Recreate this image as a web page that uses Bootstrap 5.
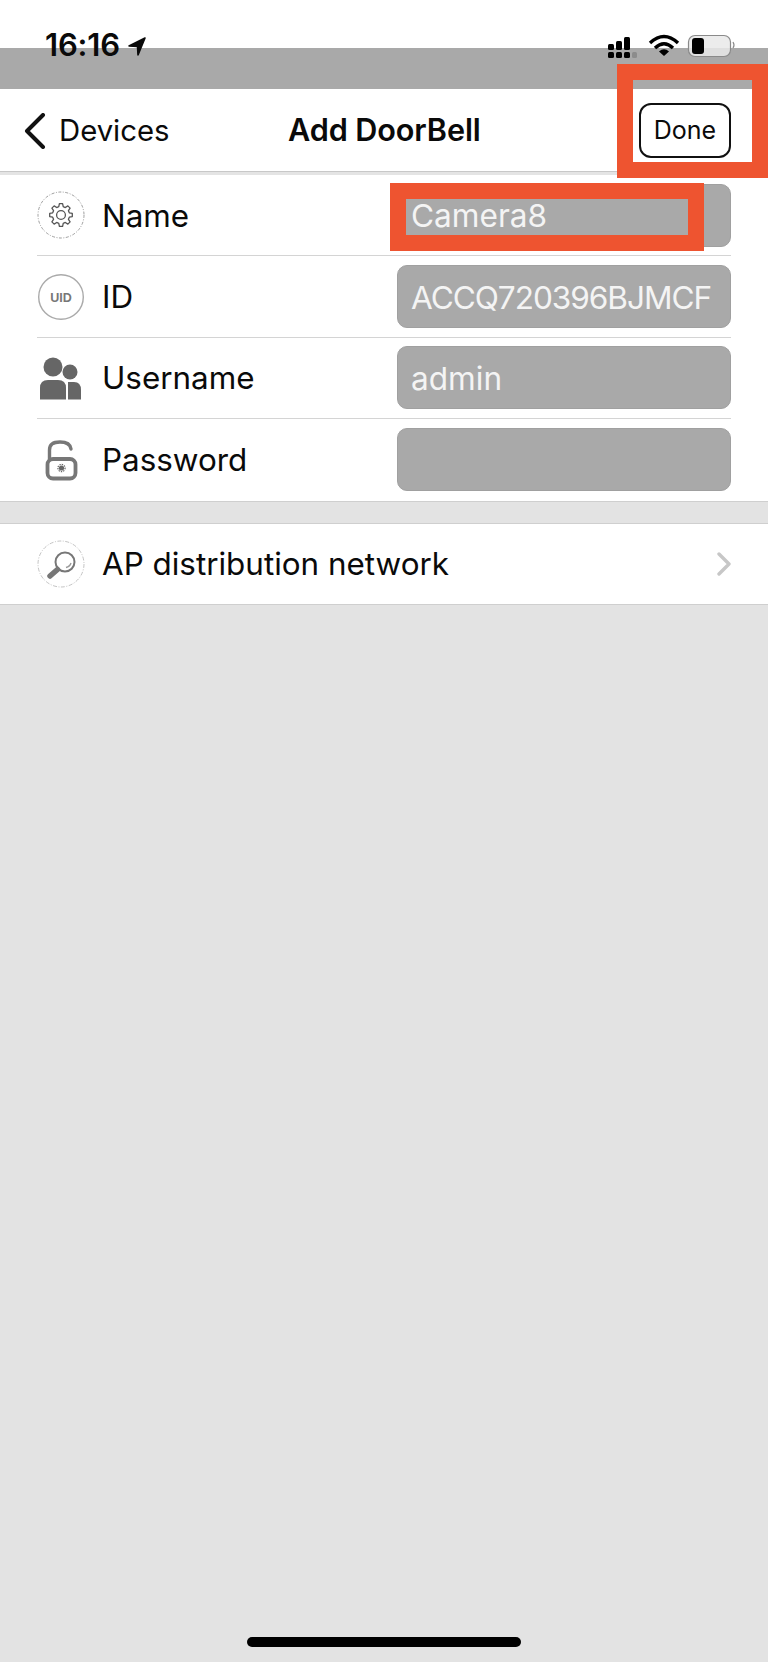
<!DOCTYPE html>
<html lang="en">
<head>
    <meta charset="UTF-8">
    <meta name="viewport" content="width=device-width, initial-scale=1.0">
    <title>Add DoorBell</title>
    <link rel="stylesheet" href="https://cdn.jsdelivr.net/npm/bootstrap@5.3.0/dist/css/bootstrap.min.css">
    <style>
        body {
            font-family: Inter, "Liberation Sans", sans-serif;
            background-color: #e3e3e3;
            color: #0a0a0a;
        }
        .phone-page {
            position: relative;
            width: 768px;
            height: 1662px;
            overflow: hidden;
            background-color: #e3e3e3;
        }
        .status-gap { height: 48px; background-color: #fff; }
        .grey-band { height: 41px; background-color: #a9a9a9; }
        .nav-bar {
            height: 86px;
            background-color: #fff;
            border-bottom: 3px solid #e4e4e4;
            box-shadow: inset 0 -1px 0 #c8c8c8;
            padding-left: 24px;
            padding-right: 37px;
        }
        .back-label { font-size: 29.3px; margin-left: 13px; }
        .nav-title {
            font-size: 30.6px;
            font-weight: 600;
            position: absolute;
            left: 288px;
            top: 110px;
            line-height: 40px;
            letter-spacing: -.1px;
        }
        .done-btn {
            width: 92px;
            height: 55px;
            padding: 0;
            font-size: 25px;
            color: #0a0a0a;
            border: 2px solid #111;
            border-radius: 12px;
            background: #fff;
        }
        .form-group-box { background-color: #fff; border-bottom: 1px solid #cfcfcf; }
        .form-line {
            height: 81.4px;
            padding-left: 37px;
            padding-right: 37px;
        }
        .form-line-inner { border-bottom: 1px solid #d4d4d4; height: 100%; }
        .form-line-inner.is-last { border-bottom: 0; }
        .row-icon { width: 48px; height: 48px; flex: none; display: block; }
        .row-label { font-size: 31.4px; margin-left: 17px; white-space: nowrap; padding-top: 2px; }
        .value-box {
            width: 334px;
            height: 63px;
            background-color: #a9a9a9;
            border: 1px solid #a0a0a0;
            border-radius: 10px;
            color: #f4f4f4;
            font-size: 31.6px;
            padding-left: 13px;
            padding-top: 2px;
        }
        .value-tight { letter-spacing: -1.05px; }
        .section-gap { height: 22px; border-bottom: 1px solid #cfcfcf; }
        .ap-row { height: 80px; padding-left: 37px; padding-right: 37px; }
        .home-bar {
            position: absolute;
            left: 247px;
            top: 1637px;
            width: 274px;
            height: 10px;
            border-radius: 5px;
            background-color: #000;
        }
        .status-time {
            position: absolute;
            left: 45px;
            top: 27px;
            font-size: 31px;
            line-height: 36px;
            font-weight: 600;
            letter-spacing: -.2px;
        }
        .status-svg { position: absolute; left: 0; top: 0; }
        .mark-box {
            position: absolute;
            border: 16px solid #ee5430;
        }
        .mark-done { left: 617px; top: 64px; width: 151px; height: 114px; }
        .mark-name { left: 390px; top: 183px; width: 314px; height: 68px; }
    </style>
</head>
<body>
    <div class="phone-page">
        <div class="status-gap"></div>
        <div class="grey-band"></div>

        <!-- nav bar -->
        <div class="nav-bar d-flex align-items-center justify-content-between">
            <div class="d-flex align-items-center">
                <svg width="22" height="36" viewBox="0 0 22 36"><path d="M19 2 L3 18 L19 34" fill="none" stroke="#111" stroke-width="4" stroke-linecap="round" stroke-linejoin="round"/></svg>
                <span class="back-label">Devices</span>
            </div>
            <button type="button" class="btn done-btn">Done</button>
        </div>
        <div class="nav-title">Add DoorBell</div>

        <!-- device fields -->
        <div class="form-group-box">
            <div class="form-line">
                <div class="form-line-inner d-flex align-items-center justify-content-between">
                    <div class="d-flex align-items-center">
                        <svg class="row-icon" viewBox="0 0 48 48">
                            <circle cx="24" cy="24" r="23" fill="none" stroke="#777" stroke-width=".7" stroke-dasharray="3 1.5 1 1.5"/>
                            <path id="gear-path" fill="none" stroke="#555" stroke-width="1.3" stroke-linejoin="round"/>
                            <circle cx="24" cy="24" r="4.4" fill="none" stroke="#555" stroke-width="1.3"/>
                        </svg>
                        <span class="row-label">Name</span>
                    </div>
                    <div class="value-box d-flex align-items-center">Camera8</div>
                </div>
            </div>
            <div class="form-line">
                <div class="form-line-inner d-flex align-items-center justify-content-between">
                    <div class="d-flex align-items-center">
                        <svg class="row-icon" viewBox="0 0 48 48">
                            <circle cx="24" cy="24" r="22.3" fill="#fff" stroke="#aaa" stroke-width="1.4"/>
                            <text x="24" y="28.5" text-anchor="middle" font-family="Liberation Sans" font-weight="700" font-size="12.5" fill="#777">UID</text>
                        </svg>
                        <span class="row-label">ID</span>
                    </div>
                    <div class="value-box value-tight d-flex align-items-center">ACCQ720396BJMCF</div>
                </div>
            </div>
            <div class="form-line">
                <div class="form-line-inner d-flex align-items-center justify-content-between">
                    <div class="d-flex align-items-center">
                        <svg class="row-icon" viewBox="0 0 48 48">
                            <circle cx="16" cy="13" r="9.5" fill="#666"/>
                            <circle cx="33" cy="18" r="7.5" fill="#666"/>
                            <path d="M3 45.5 V34 Q3 26 11 26 H21 Q29 26 29 34 V45.5 Z" fill="#666"/>
                            <path d="M31 45.5 V28 H37 Q44 28 44 36 V45.5 Z" fill="#666"/>
                        </svg>
                        <span class="row-label">Username</span>
                    </div>
                    <div class="value-box d-flex align-items-center">admin</div>
                </div>
            </div>
            <div class="form-line">
                <div class="form-line-inner is-last d-flex align-items-center justify-content-between">
                    <div class="d-flex align-items-center">
                        <svg class="row-icon" viewBox="0 0 48 48">
                            <rect x="10.5" y="23" width="28" height="19.5" rx="5.5" fill="none" stroke="#777" stroke-width="3.8"/>
                            <path d="M12.5 23 V14 Q12.5 6 23 6 Q33 6 34 13" fill="none" stroke="#777" stroke-width="3.4" stroke-linecap="round"/>
                            <circle cx="24.5" cy="32" r="2.6" fill="#666"/>
                            <circle cx="24.5" cy="32" r="3.6" fill="none" stroke="#666" stroke-width="1.2" stroke-dasharray="1.4 1"/>
                        </svg>
                        <span class="row-label">Password</span>
                    </div>
                    <div class="value-box"></div>
                </div>
            </div>
        </div>

        <div class="section-gap"></div>

        <!-- AP network row -->
        <div class="form-group-box">
            <div class="ap-row d-flex align-items-center justify-content-between">
                <div class="d-flex align-items-center">
                    <svg class="row-icon" viewBox="0 0 48 48">
                        <circle cx="24" cy="24" r="23" fill="none" stroke="#aaa" stroke-width=".7" stroke-dasharray="4 1.5 1 1.5"/>
                        <circle cx="28" cy="22" r="9.5" fill="none" stroke="#777" stroke-width="2"/>
                        <path d="M29 27.5 Q33 26.5 34 23" fill="none" stroke="#999" stroke-width="1.4"/>
                        <path d="M13 36 L20.5 29.5" stroke="#777" stroke-width="5.5" stroke-linecap="round"/>
                    </svg>
                    <span class="row-label">AP distribution network</span>
                </div>
                <svg width="14" height="24" viewBox="0 0 14 24"><path d="M2 2 L12 12 L2 22" fill="none" stroke="#c7c7c7" stroke-width="3.4" stroke-linecap="round" stroke-linejoin="round"/></svg>
            </div>
        </div>

        <!-- status bar, drawn over the band -->
        <div class="status-time">16:16</div>
        <svg class="status-svg" width="768" height="64" viewBox="0 0 768 64">
            <path d="M145 38 L129 46 L137.5 46.5 L138 55 Z" fill="#0a0a0a" stroke="#0a0a0a" stroke-width="1.6" stroke-linejoin="round"/>
            <g fill="#000">
                <rect x="608" y="44" width="6" height="6" rx="1.5"/>
                <rect x="608" y="52" width="6" height="6" rx="1.5"/>
                <rect x="616" y="41" width="6" height="9" rx="1.5"/>
                <rect x="616" y="52" width="6" height="6" rx="1.5"/>
                <rect x="624" y="37" width="6" height="13" rx="1.5"/>
                <rect x="624" y="52" width="6" height="6" rx="1.5"/>
            </g>
            <rect x="632" y="52" width="5" height="6" rx="1.5" fill="#8c8c8c"/>
            <g fill="none" stroke="#000" stroke-width="3.4">
                <path d="M650 43 Q664 30 678 43"/>
                <path d="M655 48 Q664 39.5 673 48"/>
            </g>
            <path d="M659 51.5 Q664 47 669 51.5 L664 56 Z" fill="#000"/>
            <rect x="688.5" y="35.5" width="42" height="21" rx="6.5" fill="#e9e9e9" fill-opacity=".85" stroke="#8a8a8a" stroke-width="1.2"/>
            <rect x="692" y="38" width="12" height="16" rx="3" fill="#000"/>
            <path d="M733 42 Q735 45 733 48" fill="none" stroke="#8a8a8a" stroke-width="1.2"/>
        </svg>

        <!-- red marks on the screenshot -->
        <div class="mark-box mark-done"></div>
        <div class="mark-box mark-name"></div>

        <div class="home-bar"></div>
    </div>

    <script>
        // gear outline for the Name row
        const pts = [];
        for (let i = 0; i < 8; i++) {
            const a = i * Math.PI / 4;
            [[-15, 8.6], [-8, 11.4], [8, 11.4], [15, 8.6]].forEach(p => {
                const t = a + p[0] * Math.PI / 180;
                pts.push((24 + p[1] * Math.cos(t)).toFixed(2) + ' ' + (24 + p[1] * Math.sin(t)).toFixed(2));
            });
        }
        document.getElementById('gear-path').setAttribute('d', 'M' + pts.join(' L') + ' Z');
    </script>
    <script src="https://cdn.jsdelivr.net/npm/bootstrap@5.3.0/dist/js/bootstrap.bundle.min.js"></script>
</body>
</html>
